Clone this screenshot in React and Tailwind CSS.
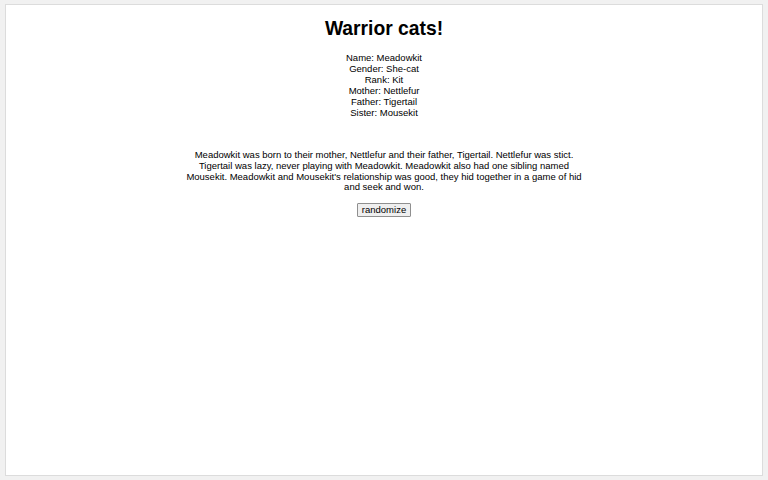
export default function App() {
  return (
    <div className="h-[480px] bg-[#f1f1f1] pt-[4px] pl-[5px] pr-[5px] pb-[4px]" style={{ fontFamily: '"Liberation Sans", Arial, sans-serif' }}>
      <div className="h-full bg-white border border-[#dcdcdc] flex flex-col items-center text-black">
        <h1 className="mt-[12px] text-[19.3px] font-bold leading-[23px]">Warrior cats!</h1>

        <div className="mt-[12px] text-[9.5px] leading-[11px] text-center">
          <p>Name: Meadowkit</p>
          <p>Gender: She-cat</p>
          <p>Rank: Kit</p>
          <p>Mother: Nettlefur</p>
          <p>Father: Tigertail</p>
          <p>Sister: Mousekit</p>
        </div>

        <p className="mt-[32px] w-[402px] text-[9.5px] leading-[10.8px] text-center">
          Meadowkit was born to their mother, Nettlefur and their father, Tigertail. Nettlefur was stict.
          Tigertail was lazy, never playing with Meadowkit. Meadowkit also had one sibling named
          Mousekit. Meadowkit and Mousekit's relationship was good, they hid together in a game of hid
          and seek and won.
        </p>

        <button className="mt-[10px] h-[14px] px-[4px] text-[9.5px] leading-[12px] bg-[#efefef] border border-[#8f8f8f] rounded-[1px]">
          randomize
        </button>
      </div>
    </div>
  )
}
